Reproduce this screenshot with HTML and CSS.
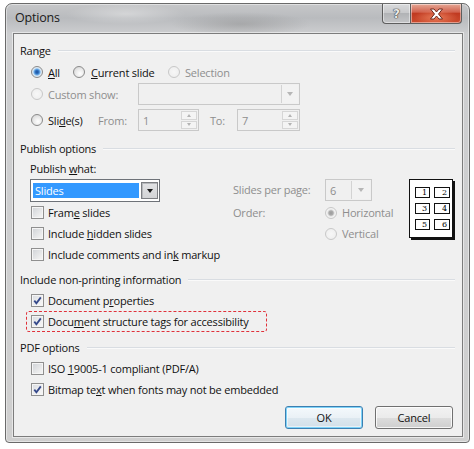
FILE: index.html
```html
<!DOCTYPE html>
<html>
<head>
<meta charset="utf-8">
<title>Options</title>
<link rel="stylesheet" href="styles.css">
</head>
<body>
<div class="window">
  <div class="titlebar">
    <span class="title">Options</span>
    <div class="caption-btns">
      <div class="cbtn help"><span class="qmark">?</span></div>
      <div class="cbtn close">
        <svg width="15" height="12" viewBox="0 0 15 12"><path d="M1.5 1 H5 L7.5 4 L10 1 H13.5 L9.5 6 L13.5 11 H10 L7.5 8 L5 11 H1.5 L5.5 6 Z" fill="#fff" stroke="#6e2a1e" stroke-width="1" stroke-linejoin="round"/></svg>
      </div>
    </div>
  </div>
  <div class="client">
    <div class="ghead"><span>Range</span></div>
    <div class="row r1">
      <span class="opt w-all"><span class="radio checked"></span><span><u>A</u>ll</span></span>
      <span class="opt w-cur"><span class="radio gap6"></span><span><u>C</u>urrent slide</span></span>
      <span class="opt dis"><span class="radio disabled"></span><span>Selection</span></span>
    </div>
    <div class="row r2">
      <span class="opt dis w-custom"><span class="radio disabled"></span><span>Custom show:</span></span>
      <span class="combo disabled w-show"><span class="cval"></span><span class="drop"><span class="arrow"></span></span></span>
    </div>
    <div class="row r3">
      <span class="opt w-slides"><span class="radio"></span><span>Sli<u>d</u>e(s)</span></span>
      <span class="dlabel w-from">From:</span>
      <span class="spin w-spin1"><span class="sval">1</span><span class="spinbtns"><span class="sb up"></span><span class="sb down"></span></span></span>
      <span class="dlabel w-to">To:</span>
      <span class="spin w-spin2"><span class="sval">7</span><span class="spinbtns"><span class="sb up"></span><span class="sb down"></span></span></span>
    </div>

    <div class="ghead g-pub"><span>Publish options</span></div>
    <div class="pub">
      <div class="pub-left">
        <div class="plabel"><span>Publish <u>w</u>hat:</span></div>
        <div class="prow-combo">
          <span class="combo active"><span class="sel">Slides</span><span class="drop pressed"><span class="arrow dark"></span></span></span>
        </div>
        <div class="crow"><span class="chk"></span><span>Fram<u>e</u> slides</span></div>
        <div class="crow"><span class="chk"></span><span>Include <u>h</u>idden slides</span></div>
        <div class="crow"><span class="chk"></span><span>Include comments and in<u>k</u> markup</span></div>
      </div>
      <div class="pub-right">
        <div class="pgrid">
          <div class="prr h23"><span class="dlabel w-spp">Slides per page:</span><span class="combo disabled w-spc"><span class="cval">6</span><span class="drop"><span class="arrow"></span></span></span></div>
          <div class="prr"><span class="dlabel w-spp">Order:</span><span class="opt dis"><span class="radio disabled checked-dis"></span><span>Horizontal</span></span></div>
          <div class="prr"><span class="dlabel w-spp"></span><span class="opt dis"><span class="radio disabled"></span><span>Vertical</span></span></div>
        </div>
        <div class="layout-icon">
          <div class="cell">1</div><div class="cell">2</div>
          <div class="cell">3</div><div class="cell">4</div>
          <div class="cell">5</div><div class="cell">6</div>
        </div>
      </div>
    </div>

    <div class="ghead g-inc"><span>Include non-printing information</span></div>
    <div class="crow c-first"><span class="chk checked"><svg width="11" height="11" viewBox="0 0 11 11"><path d="M2.3 5.6 L4.4 8.2 L8.8 2.4" fill="none" stroke="#34488a" stroke-width="1.8"/></svg></span><span>Document p<u>r</u>operties</span></div>
    <div class="crow highlight"><span class="chk checked"><svg width="11" height="11" viewBox="0 0 11 11"><path d="M2.3 5.6 L4.4 8.2 L8.8 2.4" fill="none" stroke="#34488a" stroke-width="1.8"/></svg></span><span>Docu<u>m</u>ent structure tags for accessibility</span></div>

    <div class="ghead g-pdf"><span>PDF options</span></div>
    <div class="crow c-first"><span class="chk"></span><span>ISO <u>1</u>9005-1 compliant (PDF/A)</span></div>
    <div class="crow h20"><span class="chk checked"><svg width="11" height="11" viewBox="0 0 11 11"><path d="M2.3 5.6 L4.4 8.2 L8.8 2.4" fill="none" stroke="#34488a" stroke-width="1.8"/></svg></span><span>Bitmap te<u>x</u>t when fonts may not be embedded</span></div>

    <div class="buttons">
      <button class="btn default">OK</button>
      <button class="btn">Cancel</button>
    </div>
  </div>
</div>
</body>
</html>
```

FILE: styles.css
```css
* { box-sizing: border-box; }

body {
  margin: 0;
  background: #ffffff;
  font-family: "Open Sans", "Noto Sans", sans-serif;
  font-size: 11px;
  letter-spacing: -0.2px;
  color: #111111;
}

u { text-decoration-thickness: 1px; text-underline-offset: 1px; }

.window {
  margin: 3px 0 0 5px;
  width: 465px;
  height: 440px;
  border: 1px solid #6a6a6a;
  border-radius: 7px 7px 4px 4px;
  padding: 0 6px 5px 7px;
  display: flex;
  flex-direction: column;
  background:
    radial-gradient(ellipse 70px 12px at 235px 20px, rgba(120,120,120,0.35), rgba(120,120,120,0) 100%),
    radial-gradient(ellipse 60px 10px at 120px 10px, rgba(255,255,255,0.35), rgba(255,255,255,0) 100%),
    linear-gradient(to bottom, #c6c7c9 0, #b9bbbe 14px, #cdced0 30px, #cfcfcf 100%);
  box-shadow: inset 0 0 0 1px rgba(255,255,255,0.45);
}

.titlebar {
  height: 29px;
  display: flex;
  justify-content: space-between;
  align-items: flex-start;
  flex: none;
}

.title {
  padding-left: 2px;
  line-height: 28px;
  font-size: 12.5px;
  color: #1a1a1a;
  letter-spacing: -0.2px;
}

.caption-btns {
  display: flex;
  margin-right: 1px;
}

.cbtn {
  height: 20px;
  border: 1px solid #5e5e5e;
  border-top: none;
  display: flex;
  align-items: center;
  justify-content: center;
  box-shadow: inset 0 0 0 1px rgba(255,255,255,0.45);
}

.help {
  width: 28px;
  border-right: none;
  border-radius: 0 0 0 4px;
  background: linear-gradient(to bottom, #d9dadc 0, #c8c9cb 45%, #b1b3b6 50%, #c4c5c7 100%);
}

.qmark {
  font-family: "DejaVu Sans", sans-serif;
  font-weight: bold;
  font-size: 12px;
  color: #e9e9e9;
  text-shadow: 0 0 1px #3c3c3c, 0 0 1px #3c3c3c, 0 0 1px #3c3c3c;
  line-height: 1;
}

.close {
  width: 52px;
  border-radius: 0 0 4px 0;
  background:
    radial-gradient(ellipse 22px 8px at 50% 70%, rgba(255,160,120,0.6), rgba(255,160,120,0) 100%),
    linear-gradient(to bottom, #e6a896 0, #d2634f 42%, #c03a21 50%, #cc4b2e 100%);
}

.client {
  flex: 1;
  border: 1px solid #7c7c7c;
  background: #f0f0f0;
  padding: 6px 7px 7px 0;
  box-shadow: 0 0 0 1px rgba(255,255,255,0.5);
}

/* group headers */
.ghead {
  height: 20px;
  display: flex;
  align-items: center;
  padding-left: 6px;
  gap: 7px;
}
.ghead::after {
  content: "";
  flex: 1;
  height: 1px;
  background: #d9dde2;
  box-shadow: 0 1px 0 #fafafa;
}
.g-pub { margin-top: 7px; }
.g-inc { margin-top: 4px; }
.g-pdf { margin-top: 5px; }

/* rows */
.row {
  display: flex;
  align-items: center;
  padding-left: 17px;
  height: 22px;
}
.r1 { margin-top: 1px; }
.r3 { margin-top: 4px; }

.opt {
  display: inline-flex;
  align-items: center;
  white-space: nowrap;
}
.dis, .dlabel { color: #8e8e8e; }

.w-all { width: 42px; }
.w-cur { width: 95px; }
.w-custom { width: 107px; }
.w-slides { width: 67px; }
.w-from { width: 40px; }
.w-to { width: 27px; margin-left: 11px; }
.w-show { width: 162px; }
.w-spin1 { width: 61px; }
.w-spin2 { width: 63px; }
.w-spp { width: 92px; flex: none; }
.w-spc { width: 47px; }

/* radio */
.radio {
  width: 12px;
  height: 12px;
  border-radius: 50%;
  border: 1px solid #8a8a8a;
  background: radial-gradient(circle at 60% 65%, #ffffff 0, #ebebeb 45%, #cfcfcf 100%);
  margin-right: 5px;
  flex: none;
}
.radio.gap6 { margin-right: 6px; }
.radio.checked {
  background: radial-gradient(circle at 50% 50%, #1d4f9a 0, #2f73c3 1.8px, #7fbbef 3.2px, #d8e6f3 4px, #f4f4f4 100%);
}
.radio.disabled {
  border-color: #c8c8c8;
  background: radial-gradient(circle at 50% 50%, #f7f7f7 0, #ececec 100%);
}
.radio.checked-dis {
  background: radial-gradient(circle at 50% 50%, #9a9a9a 0, #adadad 2.2px, #dedede 3.2px, #f2f2f2 4px, #f4f4f4 100%);
}

/* checkbox */
.chk {
  width: 13px;
  height: 13px;
  border: 1px solid #8f8f8f;
  background: linear-gradient(135deg, #cfd2d6 0, #f0f0f0 80%);
  box-shadow: inset 0 0 0 1px #f5f5f5;
  margin-right: 4px;
  flex: none;
  display: flex;
  align-items: center;
  justify-content: center;
}
.chk.checked { background: linear-gradient(135deg, #d9dce1 0, #f4f4f4 80%); }
.chk svg { display: block; }

.crow {
  display: flex;
  align-items: center;
  padding-left: 17px;
  height: 21px;
  white-space: nowrap;
}
.crow.h20 { height: 20px; }
.c-first { margin-top: 1px; }
.crow.highlight {
  margin-left: 12px;
  width: 241px;
  padding-left: 4px;
  border: 1px dashed #e0313a;
  border-radius: 3px;
}

/* combo */
.combo {
  display: inline-flex;
  align-items: stretch;
  height: 22px;
  border: 1px solid #abadb3;
  background: #ffffff;
}
.combo.disabled {
  border-color: #c9c9c9;
  background: #f0f0f0;
  color: #8e8e8e;
}
.cval {
  flex: 1;
  padding-left: 4px;
  display: flex;
  align-items: center;
}
.drop {
  width: 17px;
  border-left: 1px solid #d3d3d3;
  margin: 1px 1px 1px 0;
  display: flex;
  align-items: center;
  justify-content: center;
  background: #f2f2f2;
}
.w-spc .drop { width: 19px; }
.arrow {
  width: 0;
  height: 0;
  border-left: 3.5px solid transparent;
  border-right: 3.5px solid transparent;
  border-top: 4px solid #b6b6b6;
}
.arrow.dark { border-top-color: #1a1a1a; }

.combo.active {
  width: 130px;
  height: 23px;
  border: 1px solid #6e7278;
  padding: 2px 1px 2px 2px;
}
.sel {
  width: 108px;
  background: #3399ff;
  color: #ffffff;
  padding-left: 2px;
  display: flex;
  align-items: center;
  margin: 1px 0;
}
.drop.pressed {
  width: 17px;
  margin: 0 0 0 2px;
  border: 1px solid #7d7f83;
  background: linear-gradient(to bottom, #e2e3e5 0, #d3d4d6 100%);
  box-shadow: inset 1px 1px 0 #b6b8bb;
}

/* spin */
.spin {
  display: inline-flex;
  height: 22px;
  border: 1px solid #c9c9c9;
  background: #f0f0f0;
  color: #8e8e8e;
}
.sval {
  flex: 1;
  padding-left: 4px;
  display: flex;
  align-items: center;
}
.spinbtns {
  width: 16px;
  margin: 1px 1px 1px 0;
  display: flex;
  flex-direction: column;
  gap: 1px;
}
.sb {
  flex: 1;
  border: 1px solid #d6d6d6;
  background: #f4f4f4;
  display: flex;
  align-items: center;
  justify-content: center;
}
.sb::after {
  content: "";
  border-left: 2.5px solid transparent;
  border-right: 2.5px solid transparent;
}
.sb.up::after { border-bottom: 3px solid #b3b3b3; }
.sb.down::after { border-top: 3px solid #b3b3b3; }

/* publish options */
.pub { display: flex; }
.pub-left { width: 219px; flex: none; }
.plabel {
  height: 21px;
  display: flex;
  align-items: center;
  padding-left: 16px;
}
.prow-combo {
  height: 23px;
  padding-left: 16px;
  display: flex;
}
.pub-right {
  flex: 1;
  display: flex;
  padding-top: 21px;
  padding-right: 2px;
}
.pgrid { display: flex; flex-direction: column; }
.prr {
  height: 21px;
  display: flex;
  align-items: center;
}
.prr.h23 { height: 23px; align-items: flex-start; }
.prr.h23 .dlabel { padding-top: 3px; }

.layout-icon {
  margin-left: auto;
  width: 44px;
  height: 59px;
  border: 1px solid #111;
  background: #ffffff;
  box-shadow: 2px 2px 0 #111;
  display: grid;
  grid-template-columns: 15px 16px;
  grid-auto-rows: 11px;
  column-gap: 4px;
  row-gap: 5px;
  padding: 7px 0 0 5px;
}
.cell {
  border: 1px solid #111;
  font-family: "DejaVu Serif", serif;
  font-size: 8px;
  letter-spacing: 0;
  line-height: 9px;
  text-align: right;
  padding-right: 2px;
  color: #000;
}

/* buttons */
.buttons {
  margin-top: 7px;
  height: 23px;
  display: flex;
  justify-content: flex-end;
  gap: 12px;
  padding-right: 2px;
}
.btn {
  width: 78px;
  height: 23px;
  font-family: "Open Sans", "Noto Sans", sans-serif;
  font-size: 11px;
  letter-spacing: -0.2px;
  color: #111111;
  border: 1px solid #707070;
  border-radius: 3px;
  background: linear-gradient(to bottom, #f2f2f2 0, #ebebeb 50%, #dddddd 50%, #cfcfcf 100%);
  box-shadow: inset 0 0 0 1px rgba(255,255,255,0.8);
  padding: 0;
}
.btn.default {
  border-color: #3c7fb1;
  background: linear-gradient(to bottom, #f4f9fc 0, #eaf1f6 50%, #dde8ef 50%, #d2dfe8 100%);
  box-shadow: inset 0 0 0 1px #7fd3f8, inset 0 0 0 2px rgba(255,255,255,0.5);
}
```
